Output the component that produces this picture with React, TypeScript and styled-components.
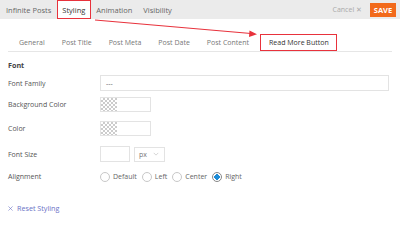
import React from "react";
import styled, { createGlobalStyle } from "styled-components";

const GlobalStyle = createGlobalStyle`
  html, body {
    margin: 0;
    padding: 0;
    background: #ffffff;
    font-family: "Open Sans", "Liberation Sans", sans-serif;
    color: #555;
  }
  * { box-sizing: border-box; }
`;

const topTabs = ["Infinite Posts", "Styling", "Animation", "Visibility"];
const subTabs = ["General", "Post Title", "Post Meta", "Post Date", "Post Content", "Read More Button"];
const aligns = ["Default", "Left", "Center", "Right"];

function App() {
  return (
    <Page>
      <GlobalStyle />
      <TopBar>
        <TopTabs>
          {topTabs.map((t) => (
            <TopTab key={t} $marked={t === "Styling"}>
              {t}
            </TopTab>
          ))}
        </TopTabs>
        <Actions>
          <CancelLink>Cancel ✕</CancelLink>
          <SaveButton>SAVE</SaveButton>
        </Actions>
      </TopBar>

      <SubTabs>
        {subTabs.map((t) => (
          <SubTab key={t} $active={t === "Read More Button"}>
            {t}
          </SubTab>
        ))}
      </SubTabs>

      <Form>
        <SectionTitle>Font</SectionTitle>
        <Row $space={6}>
          <Label>Font Family</Label>
          <TextInput>---</TextInput>
        </Row>
        <Row $space={9}>
          <Label>Background Color</Label>
          <Swatch>
            <Checker />
          </Swatch>
        </Row>
        <Row $space={10}>
          <Label>Color</Label>
          <Swatch>
            <Checker />
          </Swatch>
        </Row>
        <Row $space={7}>
          <Label>Font Size</Label>
          <SizeGroup>
            <SmallInput />
            <UnitSelect>
              px
              <Chevron viewBox="0 0 8 5">
                <path d="M1 1 L4 4 L7 1" fill="none" stroke="#bbb" strokeWidth="0.8" />
              </Chevron>
            </UnitSelect>
          </SizeGroup>
        </Row>
        <Row $space={0}>
          <Label>Alignment</Label>
          <Radios>
            {aligns.map((a) => (
              <RadioItem key={a}>
                <RadioDot $checked={a === "Right"} />
                {a}
              </RadioItem>
            ))}
          </Radios>
        </Row>
        <ResetLink>
          <XMark viewBox="0 0 6 6">
            <path d="M0.5 0.5 L5.5 5.5 M5.5 0.5 L0.5 5.5" stroke="#6b72c6" strokeWidth="0.7" />
          </XMark>
          Reset Styling
        </ResetLink>
      </Form>

      {/* red annotation arrow from Styling tab to Read More Button */}
      <Arrow viewBox="0 0 400 243">
        <line x1="95" y1="20" x2="251" y2="33.5" stroke="#e8323c" strokeWidth="1.2" />
        <polygon points="257,34.2 249.5,30.5 249,37" fill="#e8323c" />
      </Arrow>
    </Page>
  );
}

const Page = styled.div`
  position: relative;
  width: 400px;
  height: 243px;
  overflow: hidden;
`;

const TopBar = styled.header`
  height: 19px;
  background: #ebebeb;
  display: flex;
  align-items: stretch;
  justify-content: space-between;
`;

const TopTabs = styled.nav`
  display: flex;
  align-items: stretch;
`;

const TopTab = styled.div<{ $marked?: boolean }>`
  display: flex;
  align-items: center;
  padding: 0 4.5px;
  font-size: 7.5px;
  color: ${(p) => (p.$marked ? "#333" : "#666")};
  background: ${(p) => (p.$marked ? "#fff" : "transparent")};
  border: 1.5px solid ${(p) => (p.$marked ? "#e8323c" : "transparent")};
  &:first-child {
    padding-left: 5px;
  }
`;

const Actions = styled.div`
  display: flex;
  align-items: center;
  gap: 8px;
  padding-right: 4px;
`;

const CancelLink = styled.span`
  font-size: 7px;
  color: #aaa;
`;

const SaveButton = styled.button`
  background: #f26a1b;
  color: #fff;
  border: none;
  font-family: inherit;
  font-weight: 700;
  font-size: 7.5px;
  height: 14px;
  width: 26px;
  padding: 0;
`;

const SubTabs = styled.nav`
  display: flex;
  align-items: stretch;
  margin: 15px 8px 0 8px;
  height: 18px;
  padding-left: 2px;
  border-bottom: 1px solid #e6e6e6;
`;

const SubTab = styled.div<{ $active?: boolean }>`
  display: flex;
  align-items: center;
  padding: 0 7px 0 8px;
  margin-left: ${(p) => (p.$active ? "3px" : "0")};
  font-size: 7px;
  color: ${(p) => (p.$active ? "#333" : "#777")};
  border: 1.5px solid ${(p) => (p.$active ? "#e8323c" : "transparent")};
  background: #fff;
`;

const Form = styled.section`
  padding: 8px 8px 0 8px;
`;

const SectionTitle = styled.h3`
  margin: 0 0 5px 0;
  font-size: 7.2px;
  font-weight: 700;
  color: #444;
  height: 10px;
`;

const Row = styled.div<{ $space: number }>`
  display: grid;
  grid-template-columns: 92px 1fr;
  align-items: center;
  min-height: 15px;
  margin-bottom: ${(p) => p.$space}px;
`;

const Label = styled.label`
  font-size: 7px;
  color: #555;
`;

const TextInput = styled.div`
  height: 16px;
  width: 289px;
  border: 1px solid #e3e3e3;
  font-size: 7px;
  color: #666;
  padding: 0 5px;
  display: flex;
  align-items: center;
`;

const Swatch = styled.div`
  width: 51px;
  height: 15px;
  border: 1px solid #e3e3e3;
  display: flex;
`;

const Checker = styled.div`
  width: 16px;
  height: 100%;
  background-color: #fff;
  background-image:
    linear-gradient(45deg, #ccc 25%, transparent 25%, transparent 75%, #ccc 75%),
    linear-gradient(45deg, #ccc 25%, transparent 25%, transparent 75%, #ccc 75%);
  background-size: 4px 4px;
  background-position: 0 0, 2px 2px;
`;

const SizeGroup = styled.div`
  display: flex;
  align-items: center;
  gap: 4px;
`;

const SmallInput = styled.div`
  width: 30px;
  height: 16px;
  border: 1px solid #e3e3e3;
`;

const UnitSelect = styled.div`
  width: 31px;
  height: 15px;
  border: 1px solid #e3e3e3;
  font-size: 7px;
  color: #777;
  display: flex;
  align-items: center;
  justify-content: space-between;
  padding: 0 5px 0 4px;
`;

const Chevron = styled.svg`
  width: 6px;
  height: 4px;
`;

const Radios = styled.div`
  display: flex;
  align-items: center;
  gap: 5px;
`;

const RadioItem = styled.span`
  display: flex;
  align-items: center;
  gap: 3px;
  font-size: 7px;
  color: #666;
`;

const RadioDot = styled.span<{ $checked?: boolean }>`
  width: 10px;
  height: 10px;
  border-radius: 50%;
  border: 1px solid ${(p) => (p.$checked ? "#888" : "#c8c8c8")};
  background: ${(p) => (p.$checked ? "radial-gradient(circle, #1e8cd6 0 2.6px, #fff 2.9px)" : "#fff")};
`;

const ResetLink = styled.a`
  display: flex;
  align-items: center;
  gap: 4px;
  margin-top: 19px;
  font-size: 7.2px;
  color: #6b72c6;
`;

const XMark = styled.svg`
  width: 5px;
  height: 5px;
`;

const Arrow = styled.svg`
  position: absolute;
  left: 0;
  top: 0;
  width: 400px;
  height: 243px;
  pointer-events: none;
`;

export default App;
